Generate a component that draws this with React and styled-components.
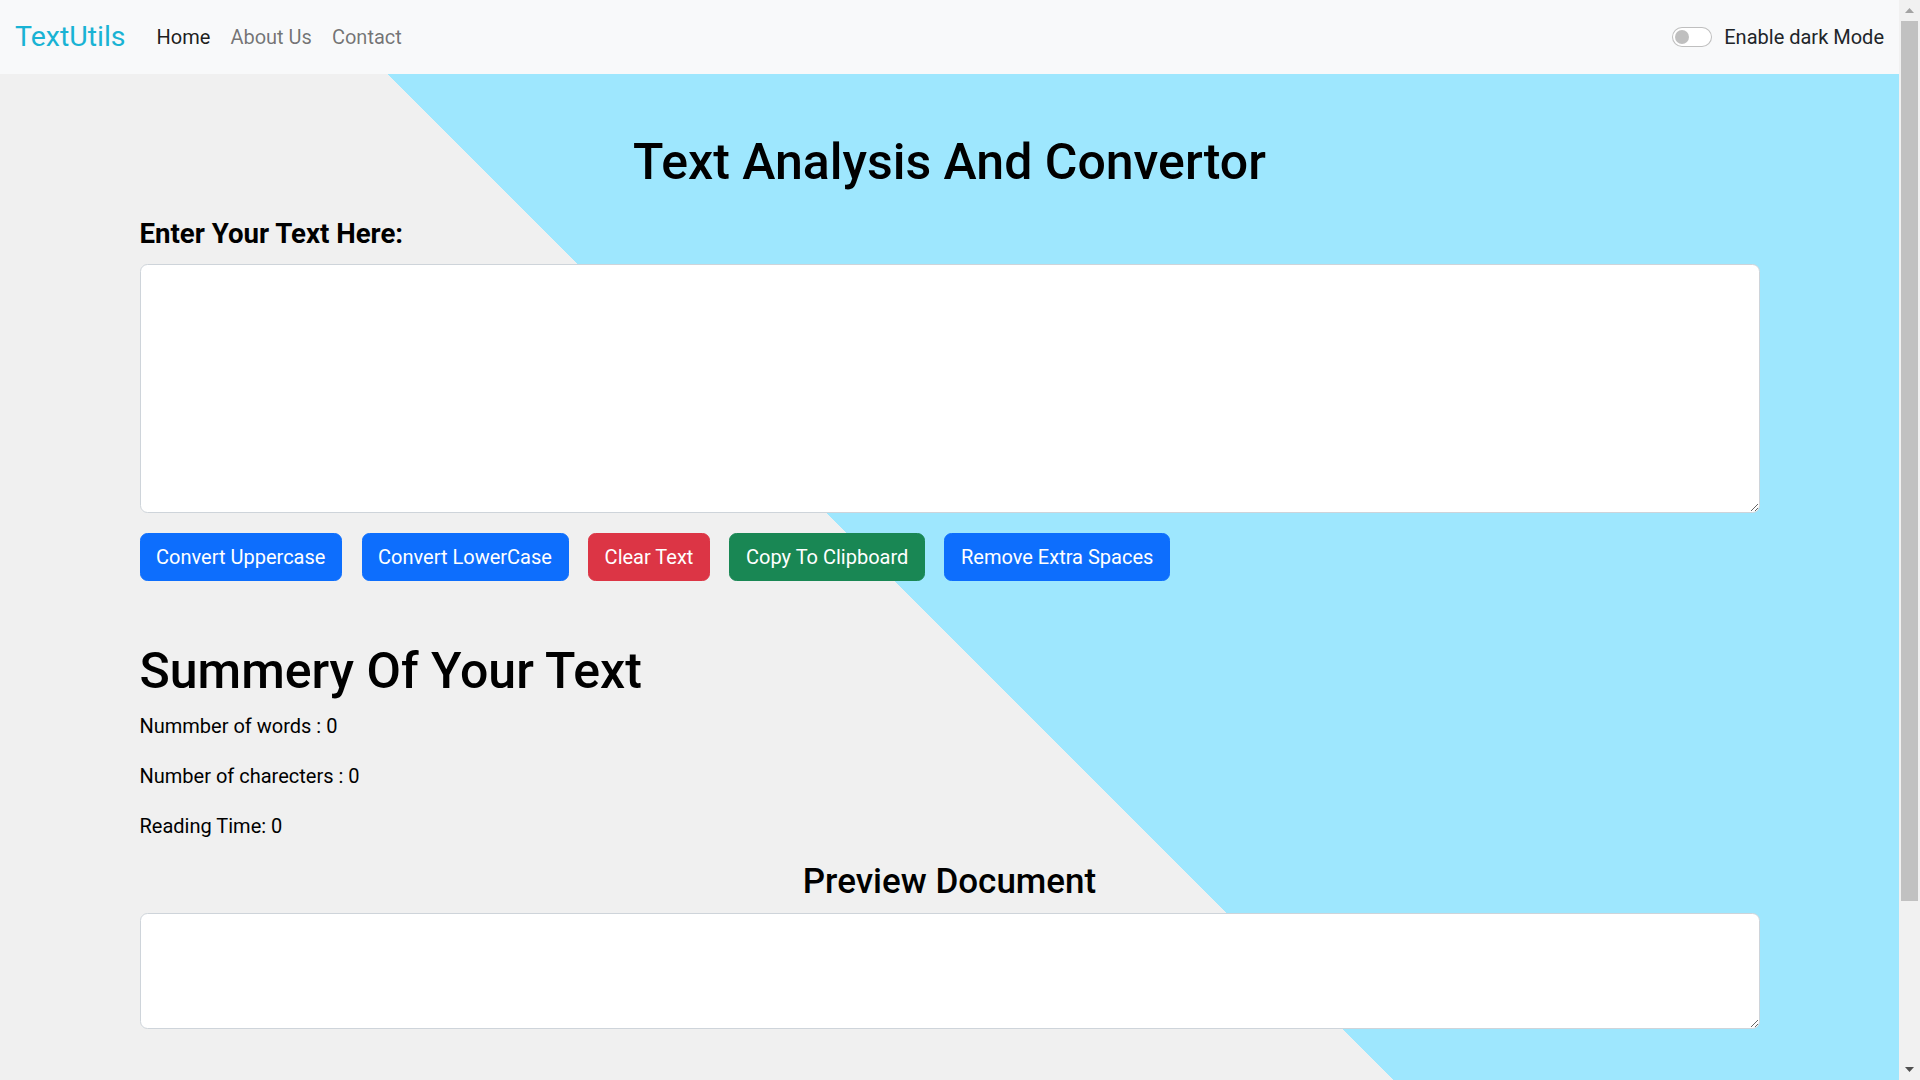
import React, { useEffect, useRef, useState } from "react"
import styled, { createGlobalStyle } from "styled-components"

const GlobalStyle = createGlobalStyle`
  *, *::before, *::after {
    box-sizing: border-box;
  }
  html, body {
    margin: 0;
    padding: 0;
    height: 100%;
    overflow: hidden;
  }
  body {
    font-family: Roboto, "Noto Sans", "Liberation Sans", sans-serif;
    font-size: 20px;
    line-height: 1.5;
    color: #212529;
    background: #f0f0f0;
  }
`

const Navbar = () => {
  const [dark, setDark] = useState(false)
  return (
    <Nav>
      <NavLeft>
        <Brand href="#">TextUtils</Brand>
        <NavLink href="#" active="true">Home</NavLink>
        <NavLink href="#">About Us</NavLink>
        <NavLink href="#">Contact</NavLink>
      </NavLeft>
      <SwitchLabel>
        <Switch on={dark ? "true" : undefined} onClick={() => setDark(!dark)} />
        Enable dark Mode
      </SwitchLabel>
    </Nav>
  )
}

const TextForm = () => {
  const [text, setText] = useState("")
  const words = text.split(/\s+/).filter((w) => w.length !== 0).length

  return (
    <Container>
      <Title>Text Analysis And Convertor</Title>
      <Label htmlFor="myBox">Enter Your Text Here:</Label>
      <TextArea
        id="myBox"
        value={text}
        onChange={(e) => setText(e.target.value)}
      />
      <ButtonRow>
        <Button onClick={() => setText(text.toUpperCase())}>Convert Uppercase</Button>
        <Button onClick={() => setText(text.toLowerCase())}>Convert LowerCase</Button>
        <Button variant="danger" onClick={() => setText("")}>Clear Text</Button>
        <Button variant="success" onClick={() => navigator.clipboard?.writeText(text)}>
          Copy To Clipboard
        </Button>
        <Button onClick={() => setText(text.split(/[ ]+/).join(" "))}>Remove Extra Spaces</Button>
      </ButtonRow>

      <Summary>Summery Of Your Text</Summary>
      <Stat>Nummber of words : {words}</Stat>
      <Stat>Number of charecters : {text.length}</Stat>
      <Stat>Reading Time: {0.008 * words}</Stat>
      <PreviewTitle>Preview Document</PreviewTitle>
      <PreviewBox readOnly value={text} />
    </Container>
  )
}

// page scrollbar, drawn so its gutter is kept even when the browser hides its own
const ScrollBar = ({ thumb }) => (
  <Bar>
    <Arrow>
      <svg width="9" height="5" viewBox="0 0 9 5">
        <path d="M4.5 0L9 5H0z" fill="#a3a3a3" />
      </svg>
    </Arrow>
    <Track>
      <Thumb style={{ height: thumb.height, marginTop: thumb.top }} />
    </Track>
    <Arrow>
      <svg width="9" height="5" viewBox="0 0 9 5">
        <path d="M0 0h9L4.5 5z" fill="#505050" />
      </svg>
    </Arrow>
  </Bar>
)

const App = () => {
  const scrollRef = useRef(null)
  const [thumb, setThumb] = useState({ height: 879, top: 0 })

  const measure = () => {
    const el = scrollRef.current
    if (!el) return
    const track = el.clientHeight - 42
    const ratio = el.clientHeight / el.scrollHeight
    setThumb({
      height: Math.round(track * ratio),
      top: Math.round((el.scrollTop / el.scrollHeight) * track),
    })
  }

  useEffect(() => {
    measure()
    window.addEventListener("resize", measure)
    return () => window.removeEventListener("resize", measure)
  }, [])

  return (
    <Viewport>
      <GlobalStyle />
      <Scroller ref={scrollRef} onScroll={measure}>
        <Page>
          <Navbar />
          <TextForm />
        </Page>
      </Scroller>
      <ScrollBar thumb={thumb} />
    </Viewport>
  )
}

const Viewport = styled.div`
  display: flex;
  height: 100vh;
`

const Scroller = styled.div`
  flex: 1;
  min-width: 0;
  overflow-y: auto;
  scrollbar-width: none;

  &::-webkit-scrollbar {
    display: none;
  }
`

const Bar = styled.div`
  width: 21px;
  flex-shrink: 0;
  background: #f1f1f1;
  display: flex;
  flex-direction: column;
`

const Arrow = styled.div`
  height: 21px;
  display: flex;
  align-items: center;
  justify-content: center;
`

const Track = styled.div`
  flex: 1;
  padding: 0 2px;
`

const Thumb = styled.div`
  background: #c1c1c1;
`

const Page = styled.div`
  min-height: 1274px;
  background: #f0f0f0 linear-gradient(45deg, #f0f0f0 50%, #9ee7fe 50%) 313px 0 / 4000px 4000px no-repeat;
`

const Nav = styled.nav`
  height: 74px;
  padding: 0 15px;
  background-color: #f8f9fa;
  display: flex;
  align-items: center;
  justify-content: space-between;
`

const NavLeft = styled.div`
  display: flex;
  align-items: center;
`

const Brand = styled.a`
  font-size: 28.5px;
  line-height: 1.5;
  color: #19b3d4;
  text-decoration: none;
  margin-right: 21px;
`

const NavLink = styled.a`
  padding: 10px;
  font-size: 20px;
  color: ${(props) => (props.active ? "rgba(0, 0, 0, 0.9)" : "rgba(0, 0, 0, 0.55)")};
  text-decoration: none;
`

const SwitchLabel = styled.label`
  display: flex;
  align-items: center;
  gap: 12px;
  font-size: 20px;
  color: #212529;
`

const Switch = styled.span`
  width: 40px;
  height: 20px;
  border-radius: 20px;
  border: 1.25px solid rgba(0, 0, 0, 0.25);
  background: ${(props) => (props.on ? "#0d6efd" : "#fff")};
  display: flex;
  align-items: center;
  justify-content: ${(props) => (props.on ? "flex-end" : "flex-start")};
  padding: 0 2px;
  cursor: pointer;

  &::after {
    content: "";
    width: 14px;
    height: 14px;
    border-radius: 50%;
    background: ${(props) => (props.on ? "#fff" : "rgba(0, 0, 0, 0.25)")};
  }
`

const Container = styled.main`
  max-width: 1650px;
  margin: 0 auto;
  padding: 0 15px 245px;
  color: #000;
`

const Title = styled.h1`
  margin: 58px 0 25px;
  font-size: 50px;
  font-weight: 500;
  line-height: 1.2;
  text-align: center;
`

const Label = styled.label`
  display: block;
  margin-bottom: 14px;
  font-size: 27.6px;
  font-weight: 700;
  line-height: 1.2;
`

const TextArea = styled.textarea`
  display: block;
  width: 100%;
  height: 249px;
  padding: 7.5px 15px;
  font-family: inherit;
  font-size: 20px;
  line-height: 1.5;
  color: #212529;
  background-color: #fff;
  border: 1.25px solid #ced4da;
  border-radius: 7.5px;
  resize: vertical;
  outline: none;
`

const ButtonRow = styled.div`
  display: flex;
  gap: 19.5px;
  margin-top: 20px;
`

const colors = {
  primary: "#0d6efd",
  danger: "#dc3545",
  success: "#198754",
}

const Button = styled.button`
  height: 48px;
  padding: 7.5px 15.6px;
  font-family: inherit;
  font-size: 20px;
  line-height: 1.5;
  color: #fff;
  background-color: ${(props) => colors[props.variant || "primary"]};
  border: 1.25px solid ${(props) => colors[props.variant || "primary"]};
  border-radius: 7.5px;
  cursor: pointer;
`

const Summary = styled.h1`
  margin: 59.5px 0 10px;
  font-size: 50px;
  font-weight: 500;
  line-height: 1.2;
`

const Stat = styled.p`
  margin: 0 0 20px;
  font-size: 20px;
  line-height: 30px;
`

const PreviewTitle = styled.h3`
  margin: 0 0 10px;
  font-size: 35px;
  font-weight: 500;
  line-height: 1.2;
  text-align: center;
`

const PreviewBox = styled(TextArea)`
  height: 116px;
`

export default App
